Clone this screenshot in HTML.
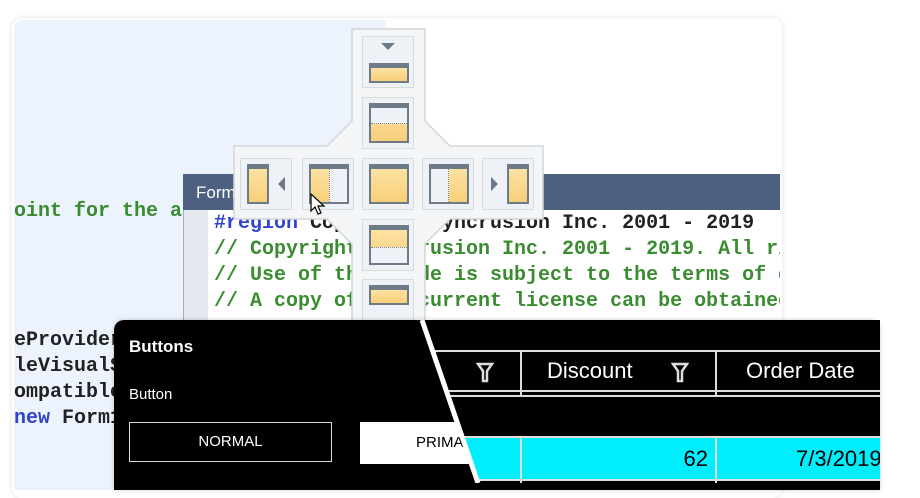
<!DOCTYPE html>
<html><head><meta charset="utf-8"><style>
*{margin:0;padding:0;box-sizing:border-box}
body{width:920px;height:483px;overflow:hidden;background:#fff;position:relative;font-family:"Liberation Sans",sans-serif}
.a{position:absolute}
.card{left:12px;top:18px;width:770px;height:480px;border-radius:10px;background:#fff;box-shadow:0 0 6px rgba(0,0,0,.12)}
.blue{left:14px;top:20px;width:372px;height:470px;background:#ecf3fc;border-radius:8px 0 0 0}
.mono{font-family:"Liberation Mono",monospace;font-size:20px;font-weight:bold;white-space:pre;line-height:26px}
.g{color:#3a8c30}.b{color:#3344cc}.k{color:#222}
.btn{position:absolute;width:52px;height:52px;background:#eef2f6;border:1px solid #d6dbe0}
.ic{position:absolute;border:2px solid #6d7b89;border-top-width:5px;background:linear-gradient(#fde2a2,#f8cf7a)}
.half{position:absolute;background:#eef2f6}
</style></head><body>
<div class="a card"></div>
<div class="a blue"></div>
<div class="a mono g" style="left:14px;top:199px;width:170px;overflow:hidden">oint for the ap</div>
<div class="a mono" style="left:14px;top:328px;width:110px;overflow:hidden"><span class="k">eProvider
leVisualS
ompatible
</span><span class="b">new</span><span class="k"> Form1</span></div>
<!-- editor -->
<div class="a" style="left:183px;top:174px;width:597px;height:150px;background:#fff;border-left:1px solid #aab"></div>
<div class="a" style="left:183px;top:174px;width:597px;height:36px;background:#4d6080"></div>
<div class="a" style="left:196px;top:183px;color:#fff;font-size:17px">Form</div>
<div class="a" style="left:184px;top:210px;width:24px;height:114px;background:#e4e8ee"></div>
<div class="a mono" style="left:214px;top:211px;width:566px;overflow:hidden"><span class="b">#region</span><span class="k"> Copyright Syncrusion Inc. 2001 - 2019</span>
<span class="g">// Copyright Syncfusion Inc. 2001 - 2019. All rights</span>
<span class="g">// Use of this code is subject to the terms of our</span>
<span class="g">// A copy of the current license can be obtained</span></div>
<!-- dock cross -->
<svg class="a" style="left:0;top:0" width="920" height="483">
<path d="M352,29 H425 V121 L450,146 H543 V219 H450 L425,244 V330 H352 V244 L327,219 H234 V146 H327 L352,121 Z" fill="#f3f5f7" stroke="#d2d6da" stroke-width="1.5"/>
</svg>
<div class="btn" style="left:362px;top:36px"><svg class="a" style="left:18px;top:6px" width="14" height="8"><path d="M0,0H14L7,7Z" fill="#6d7b89"/></svg><div class="ic" style="left:6px;top:26px;width:40px;height:20px"></div></div>
<div class="btn" style="left:362px;top:97px"><div class="ic" style="left:6px;top:5px;width:40px;height:40px"><div class="half" style="left:0;top:0;width:36px;height:16px;border-bottom:1px dotted #888"></div></div></div>
<div class="btn" style="left:240px;top:158px"><div class="ic" style="left:6px;top:5px;width:22px;height:40px"></div><svg class="a" style="left:36px;top:18px" width="8" height="14"><path d="M8,0V14L1,7Z" fill="#6d7b89"/></svg></div>
<div class="btn" style="left:302px;top:158px"><div class="ic" style="left:6px;top:5px;width:40px;height:40px"><div class="half" style="left:18px;top:0;width:18px;height:33px;border-left:1px dotted #888"></div></div></div>
<div class="btn" style="left:362px;top:158px"><div class="ic" style="left:6px;top:5px;width:40px;height:40px"></div></div>
<div class="btn" style="left:422px;top:158px"><div class="ic" style="left:6px;top:5px;width:40px;height:40px"><div class="half" style="left:0;top:0;width:18px;height:33px;border-right:1px dotted #888"></div></div></div>
<div class="btn" style="left:482px;top:158px"><svg class="a" style="left:8px;top:18px" width="8" height="14"><path d="M0,0V14L7,7Z" fill="#6d7b89"/></svg><div class="ic" style="left:24px;top:5px;width:22px;height:40px"></div></div>
<div class="btn" style="left:362px;top:219px"><div class="ic" style="left:6px;top:5px;width:40px;height:40px"><div class="half" style="left:0;top:17px;width:36px;height:16px;border-top:1px dotted #888"></div></div></div>
<div class="btn" style="left:362px;top:279px"><div class="ic" style="left:6px;top:5px;width:40px;height:20px"></div></div>
<!-- cursor -->
<svg class="a" style="left:310px;top:193px" width="18" height="24"><path d="M1,1V18L5,14L8,21L11,20L8,13H14Z" fill="#fff" stroke="#000" stroke-width="1.2"/></svg>
<!-- dark panel -->
<div class="a" style="left:114px;top:320px;width:766px;height:170px;background:#000;border-radius:10px 10px 0 0;box-shadow:0 0 5px rgba(0,0,0,.2)"></div>
<div class="a" style="left:0;top:0;width:880px;height:483px;clip-path:polygon(0 0,420px 0,420px 320px,476px 483px,0 483px)">
<div class="a" style="left:129px;top:337px;color:#fff;font-weight:bold;font-size:17px">Buttons</div>
<div class="a" style="left:129px;top:386px;color:#fff;font-size:15px">Button</div>
<div class="a" style="left:129px;top:422px;width:203px;height:40px;border:1.5px solid #ddd;color:#fff;font-size:15px;text-align:center;line-height:37px">NORMAL</div>
<div class="a" style="left:360px;top:422px;width:120px;height:42px;background:#fff;color:#000;font-size:15px;line-height:42px;padding-left:56px">PRIMARY</div>
</div>
<!-- grid right side clipped -->
<div class="a" style="left:0;top:0;width:880px;height:483px;clip-path:polygon(424px 320px,880px 320px,880px 483px,480px 483px)">
 <div class="a" style="left:400px;top:320px;width:480px;height:163px;background:#000"></div>
 <div class="a" style="left:400px;top:350px;width:480px;height:2px;background:#ddd"></div>
 <div class="a" style="left:400px;top:390px;width:480px;height:2px;background:#ddd"></div>
 <div class="a" style="left:400px;top:395px;width:480px;height:2px;background:#ddd"></div>
 <div class="a" style="left:400px;top:436px;width:480px;height:2px;background:#ddd"></div>
 <div class="a" style="left:400px;top:438px;width:480px;height:41px;background:#00eefc"></div>
 <div class="a" style="left:400px;top:479px;width:480px;height:2px;background:#ddd"></div>
 <div class="a" style="left:520px;top:350px;width:2px;height:47px;background:#ddd"></div>
 <div class="a" style="left:715px;top:350px;width:2px;height:47px;background:#ddd"></div>
 <div class="a" style="left:520px;top:436px;width:2px;height:47px;background:#ddd"></div>
 <div class="a" style="left:715px;top:436px;width:2px;height:47px;background:#ddd"></div>
 <div class="a" style="left:420px;top:358px;color:#fff;font-size:22px">ty</div>
 <div class="a" style="left:547px;top:358px;color:#fff;font-size:22px">Discount</div>
 <div class="a" style="left:746px;top:358px;color:#fff;font-size:22px;white-space:nowrap">Order Date</div>
 <svg class="a" style="left:476px;top:362px" width="18" height="22"><path d="M2,2H16L11,9V19H7V9Z" fill="none" stroke="#ddd" stroke-width="2.5"/></svg>
 <svg class="a" style="left:671px;top:362px" width="18" height="22"><path d="M2,2H16L11,9V19H7V9Z" fill="none" stroke="#ddd" stroke-width="2.5"/></svg>
 <div class="a" style="left:600px;top:446px;width:108px;text-align:right;color:#000;font-size:22px">62</div>
 <div class="a" style="left:796px;top:446px;color:#000;font-size:22px;white-space:nowrap">7/3/2019</div>
</div>
<!-- white diagonal -->
<svg class="a" style="left:0;top:0" width="920" height="483"><path d="M422,320L478,483" stroke="#fff" stroke-width="5"/></svg>
</body></html>
